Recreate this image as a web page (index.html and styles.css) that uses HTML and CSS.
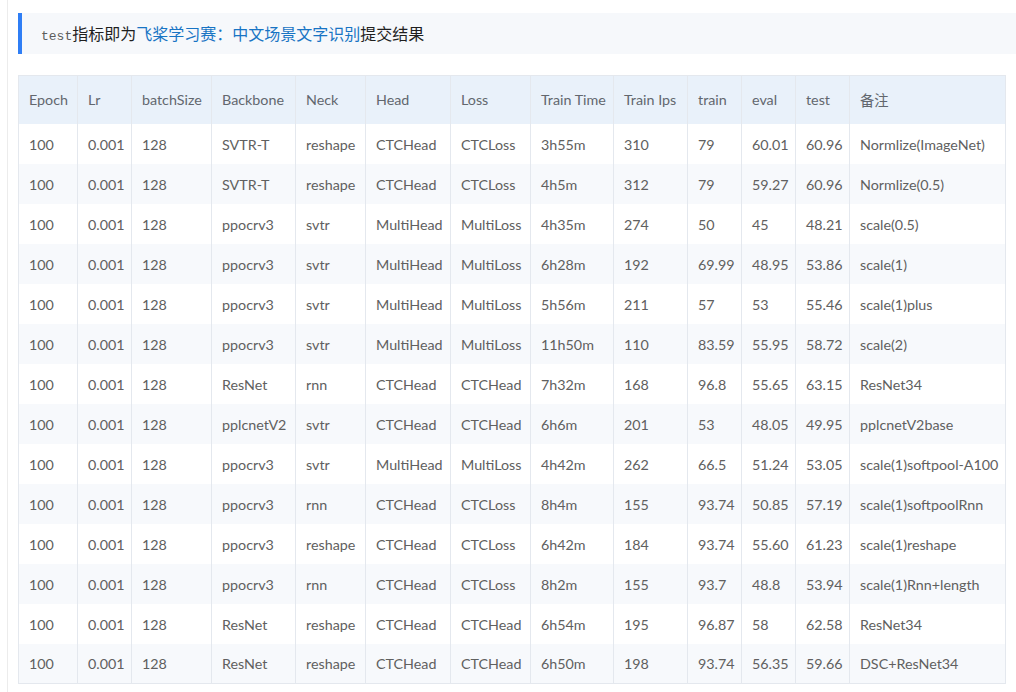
FILE: index.html
```html
<!DOCTYPE html>
<html lang="zh">
<head>
<meta charset="utf-8">
<link rel="stylesheet" href="styles.css">
</head>
<body>
<div class="page">
  <blockquote class="note"><code class="mono">test</code>指标即为<a class="link" href="#">飞桨学习赛：中文场景文字识别</a>提交结果</blockquote>
  <table class="grid">
    <colgroup>
      <col style="width:59px"><col style="width:54px"><col style="width:80px"><col style="width:84px"><col style="width:70px"><col style="width:85px"><col style="width:80px"><col style="width:83px"><col style="width:74px"><col style="width:54px"><col style="width:54px"><col style="width:54px"><col style="width:156px">
    </colgroup>
    <thead>
      <tr><th>Epoch</th><th>Lr</th><th>batchSize</th><th>Backbone</th><th>Neck</th><th>Head</th><th>Loss</th><th>Train Time</th><th>Train Ips</th><th>train</th><th>eval</th><th>test</th><th>备注</th></tr>
    </thead>
    <tbody>
      <tr><td>100</td><td>0.001</td><td>128</td><td>SVTR-T</td><td>reshape</td><td>CTCHead</td><td>CTCLoss</td><td>3h55m</td><td>310</td><td>79</td><td>60.01</td><td>60.96</td><td>Normlize(ImageNet)</td></tr>
      <tr><td>100</td><td>0.001</td><td>128</td><td>SVTR-T</td><td>reshape</td><td>CTCHead</td><td>CTCLoss</td><td>4h5m</td><td>312</td><td>79</td><td>59.27</td><td>60.96</td><td>Normlize(0.5)</td></tr>
      <tr><td>100</td><td>0.001</td><td>128</td><td>ppocrv3</td><td>svtr</td><td>MultiHead</td><td>MultiLoss</td><td>4h35m</td><td>274</td><td>50</td><td>45</td><td>48.21</td><td>scale(0.5)</td></tr>
      <tr><td>100</td><td>0.001</td><td>128</td><td>ppocrv3</td><td>svtr</td><td>MultiHead</td><td>MultiLoss</td><td>6h28m</td><td>192</td><td>69.99</td><td>48.95</td><td>53.86</td><td>scale(1)</td></tr>
      <tr><td>100</td><td>0.001</td><td>128</td><td>ppocrv3</td><td>svtr</td><td>MultiHead</td><td>MultiLoss</td><td>5h56m</td><td>211</td><td>57</td><td>53</td><td>55.46</td><td>scale(1)plus</td></tr>
      <tr><td>100</td><td>0.001</td><td>128</td><td>ppocrv3</td><td>svtr</td><td>MultiHead</td><td>MultiLoss</td><td>11h50m</td><td>110</td><td>83.59</td><td>55.95</td><td>58.72</td><td>scale(2)</td></tr>
      <tr><td>100</td><td>0.001</td><td>128</td><td>ResNet</td><td>rnn</td><td>CTCHead</td><td>CTCHead</td><td>7h32m</td><td>168</td><td>96.8</td><td>55.65</td><td>63.15</td><td>ResNet34</td></tr>
      <tr><td>100</td><td>0.001</td><td>128</td><td>pplcnetV2</td><td>svtr</td><td>CTCHead</td><td>CTCHead</td><td>6h6m</td><td>201</td><td>53</td><td>48.05</td><td>49.95</td><td>pplcnetV2base</td></tr>
      <tr><td>100</td><td>0.001</td><td>128</td><td>ppocrv3</td><td>svtr</td><td>MultiHead</td><td>MultiLoss</td><td>4h42m</td><td>262</td><td>66.5</td><td>51.24</td><td>53.05</td><td>scale(1)softpool-A100</td></tr>
      <tr><td>100</td><td>0.001</td><td>128</td><td>ppocrv3</td><td>rnn</td><td>CTCHead</td><td>CTCLoss</td><td>8h4m</td><td>155</td><td>93.74</td><td>50.85</td><td>57.19</td><td>scale(1)softpoolRnn</td></tr>
      <tr><td>100</td><td>0.001</td><td>128</td><td>ppocrv3</td><td>reshape</td><td>CTCHead</td><td>CTCLoss</td><td>6h42m</td><td>184</td><td>93.74</td><td>55.60</td><td>61.23</td><td>scale(1)reshape</td></tr>
      <tr><td>100</td><td>0.001</td><td>128</td><td>ppocrv3</td><td>rnn</td><td>CTCHead</td><td>CTCLoss</td><td>8h2m</td><td>155</td><td>93.7</td><td>48.8</td><td>53.94</td><td>scale(1)Rnn+length</td></tr>
      <tr><td>100</td><td>0.001</td><td>128</td><td>ResNet</td><td>reshape</td><td>CTCHead</td><td>CTCHead</td><td>6h54m</td><td>195</td><td>96.87</td><td>58</td><td>62.58</td><td>ResNet34</td></tr>
      <tr><td>100</td><td>0.001</td><td>128</td><td>ResNet</td><td>reshape</td><td>CTCHead</td><td>CTCHead</td><td>6h50m</td><td>198</td><td>93.74</td><td>56.35</td><td>59.66</td><td>DSC+ResNet34</td></tr>
    </tbody>
  </table>
</div>
</body>
</html>
```

FILE: styles.css
```css
html, body {
  margin: 0;
  padding: 0;
  background: #ffffff;
  overflow: hidden;
}
body {
  font-family: "Lato", "Noto Sans CJK SC", sans-serif;
  color: #333;
}
.page {
  margin-left: 7px;
  border-left: 1px solid #ececec;
  padding: 13px 0 0 10px;
  min-height: 692px;
  box-sizing: border-box;
  width: 1040px;
}
.note {
  margin: 0;
  height: 41px;
  line-height: 41px;
  box-sizing: border-box;
  border-left: 4px solid #2f7ef5;
  background: #f6f8fb;
  padding: 0 0 0 19px;
  font-size: 16px;
  color: #1f1f1f;
  font-family: "Noto Sans CJK SC", sans-serif;
  white-space: nowrap;
}
.mono {
  font-family: "Liberation Mono", "DejaVu Sans Mono", monospace;
  font-size: 13px;
  color: #5c5c5c;
}
.link {
  color: #1874c4;
  text-decoration: none;
}
.grid {
  margin-top: 21px;
  border-collapse: collapse;
  table-layout: fixed;
  width: 987px;
  font-size: 14.3px;
  color: #606060;
  border: 1px solid #e4e8ee;
}
.grid th, .grid td {
  text-align: left;
  font-weight: normal;
  padding: 0 10px;
  white-space: nowrap;
  border-left: 1px solid #e4e8ee;
  border-right: 1px solid #e4e8ee;
}
.grid thead tr {
  height: 48px;
}
.grid th {
  background: #e9f1fa;
  color: #62676e;
}
.grid tbody tr {
  height: 40px;
}
.grid td {
  padding-top: 1px;
}
.grid tbody tr:nth-child(even) td {
  background: #f7f9fc;
}
```
